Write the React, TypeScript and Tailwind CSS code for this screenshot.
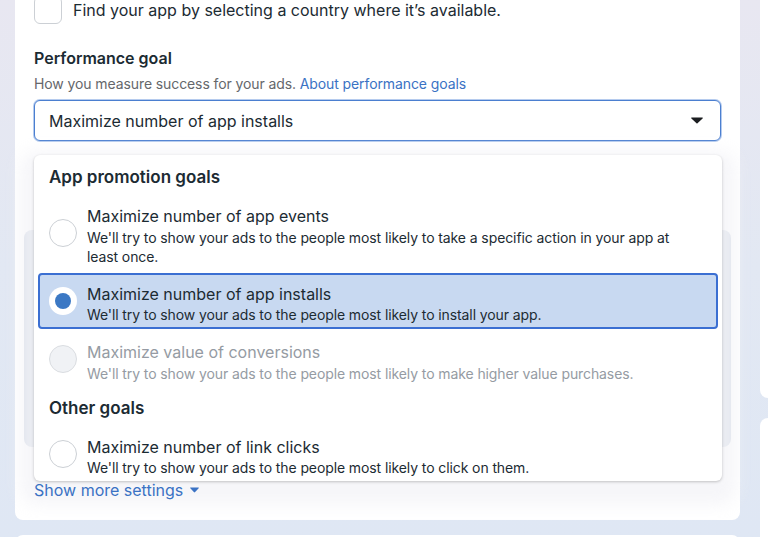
import React from "react";

type Goal = { title: string; desc: string; state: "off" | "on" | "disabled" };

const appGoals: Goal[] = [
  {
    title: "Maximize number of app events",
    desc: "We'll try to show your ads to the people most likely to take a specific action in your app at least once.",
    state: "off",
  },
  {
    title: "Maximize number of app installs",
    desc: "We'll try to show your ads to the people most likely to install your app.",
    state: "on",
  },
  {
    title: "Maximize value of conversions",
    desc: "We'll try to show your ads to the people most likely to make higher value purchases.",
    state: "disabled",
  },
];

const otherGoals: Goal[] = [
  {
    title: "Maximize number of link clicks",
    desc: "We'll try to show your ads to the people most likely to click on them.",
    state: "off",
  },
];

function Radio({ state }: { state: Goal["state"] }) {
  if (state === "on") {
    return (
      <span className="mb-[6px] flex h-7 w-7 shrink-0 items-center justify-center rounded-full bg-white">
        <span className="h-4 w-4 rounded-full bg-[#3b78c4]" />
      </span>
    );
  }
  if (state === "disabled") {
    return <span className="mb-[6px] h-7 w-7 shrink-0 rounded-full border border-[#dadde1] bg-[#f0f2f5]" />;
  }
  return <span className="mb-[6px] h-7 w-7 shrink-0 rounded-full border border-[#ccd0d5] bg-white" />;
}

function GoalRow({ goal }: { goal: Goal }) {
  const on = goal.state === "on";
  const off = goal.state === "disabled";
  return (
    <div
      className={
        on
          ? "mx-1 flex items-center gap-[10px] rounded border-2 border-[#3b6fd2] bg-[#c8d9f1] pb-[3px] pl-[9px] pr-3 pt-[9px]"
          : "mx-1 flex items-center gap-[10px] rounded border-2 border-transparent pb-[3px] pl-[9px] pr-3 pt-[9px]"
      }
    >
      <Radio state={goal.state} />
      <div className="min-w-0">
        <div className={off ? "text-base leading-5 text-[#959ba3]" : "text-base leading-5 text-[#1c2b33]"}>{goal.title}</div>
        <div
          className={
            off
              ? "mt-[1.5px] text-sm leading-[19px] tracking-[-0.1px] text-[#959ba3]"
              : "mt-[1.5px] text-sm leading-[19px] tracking-[-0.1px] text-[#1c2b33]"
          }
        >
          {goal.desc}
        </div>
      </div>
    </div>
  );
}

function GoalMenu() {
  return (
    <div className="absolute left-0 right-[-1px] top-[55px] z-10 h-[326px] overflow-hidden rounded-md bg-white shadow-[0_1px_3px_rgba(0,0,0,0.22),0_10px_16px_14px_rgba(243,243,247,0.75)]">
      <div className="px-[15px] pt-[11px] text-[17px] font-semibold leading-[22px] text-[#1c2b33]">App promotion goals</div>
      <div className="mt-[7px] flex flex-col gap-[2px]">
        {appGoals.map((g) => (
          <GoalRow key={g.title} goal={g} />
        ))}
      </div>
      <div className="px-[15px] pt-[9px] text-[17px] font-semibold leading-[22px] text-[#1c2b33]">Other goals</div>
      <div className="mt-[7px] flex flex-col gap-[2px]">
        {otherGoals.map((g) => (
          <GoalRow key={g.title} goal={g} />
        ))}
      </div>
    </div>
  );
}

export default function App() {
  return (
    <div
      className="flex h-[537px] w-[768px] overflow-hidden bg-gradient-to-b from-[#e8e7f1] via-[#e2e8f3] to-[#dfe7f4] text-[#1c2b33]"
      style={{ fontFamily: "Inter, 'Noto Sans', sans-serif" }}
    >
      <div className="ml-[15px] flex w-[725px] shrink-0 flex-col gap-[15px]">
        <div className="h-[520px] shrink-0 rounded-b-lg bg-white px-[19px]">
          <div className="-mt-1 flex items-center gap-[11px]">
            <span className="h-7 w-7 shrink-0 rounded-md border border-[#ccd0d5] bg-white" />
            <span className="text-base leading-5">Find your app by selecting a country where it’s available.</span>
          </div>

          <div className="mt-6 text-base font-semibold leading-5">Performance goal</div>
          <div className="mt-[7px] text-sm leading-[18px] tracking-[-0.1px] text-[#65676b]">
            How you measure success for your ads. <span className="text-[#3a72c4]">About performance goals</span>
          </div>

          <div className="relative mt-[7px]">
            <div className="flex h-[41px] items-center justify-between rounded-md border border-[#4b7fd0] bg-white pl-[14px] pr-[17px] shadow-[0_0_0_1px_#b5cbee]">
              <span className="text-base">Maximize number of app installs</span>
              <svg width="12" height="7" viewBox="0 0 12 7">
                <path d="M0.8 0.5h10.4c.5 0 .8.6.4 1L6.5 6.2c-.3.3-.7.3-1 0L.4 1.5C0 1.1.3.5.8.5z" fill="#1c1e21" />
              </svg>
            </div>

            <div className="-mx-[10px] mt-[89px] h-[217px] rounded-lg bg-[#d6dde7]" />
            <div className="relative z-20 mt-[33px] flex w-fit items-center gap-[7px] text-base leading-5 text-[#3a72c4]">
              Show more settings
              <svg width="9" height="6" viewBox="0 0 9 6">
                <path d="M0.6 0.5h7.8c.4 0 .6.5.3.8L4.9 5.3c-.2.2-.6.2-.8 0L.3 1.3C0 1 .2.5.6.5z" fill="#3a72c4" />
              </svg>
            </div>

            <GoalMenu />
          </div>
        </div>
        <div className="h-[60px] shrink-0 rounded-t-lg bg-white" />
      </div>

      <div className="ml-[20px] flex flex-1 flex-col gap-[20px]">
        <div className="h-[398px] shrink-0 rounded-bl-lg bg-white" />
        <div className="flex-1 rounded-tl-lg bg-white" />
      </div>
    </div>
  );
}
